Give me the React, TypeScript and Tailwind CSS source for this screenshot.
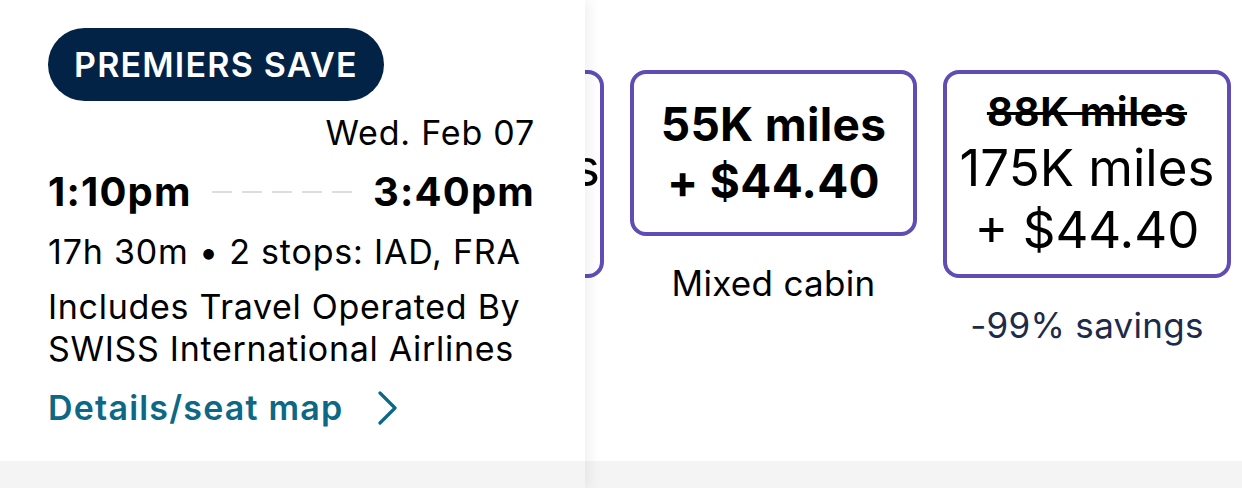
import React from 'react';

const font = { fontFamily: 'Inter, "Noto Sans", sans-serif' };

const FlightInfo: React.FC = () => (
  <div className="flex-1 bg-white pl-[48px] pr-[50px] pt-[28px]">
    <div className="inline-flex h-[73px] items-center rounded-full bg-[#032346] px-[26px] text-[34px] font-semibold tracking-[1.2px] text-white">
      PREMIERS SAVE
    </div>
    <div className="mt-[12px] text-right text-[34px] leading-[40px] tracking-[0.8px] text-black">Wed. Feb 07</div>
    <div className="mt-[15px] flex h-[48px] items-center">
      <span className="text-[40px] font-bold tracking-[1.2px] text-black">1:10pm</span>
      <div className="ml-[20px] mr-[17px] h-[2px] flex-1 bg-[repeating-linear-gradient(90deg,#dddddd_0_20px,transparent_20px_30px)]" />
      <span className="text-[40px] font-bold tracking-[1.2px] text-black">3:40pm</span>
    </div>
    <div className="mt-[15px] text-[34px] leading-[42px] tracking-[0.8px] text-black">17h 30m • 2 stops: IAD, FRA</div>
    <div className="mt-[13px] text-[34px] leading-[42px] tracking-[0.7px] text-black">
      Includes Travel Operated By
      <br />
      SWISS International Airlines
    </div>
    <div className="mt-[17px] flex items-center gap-[34px] text-[34px] font-semibold leading-[42px] tracking-[1.2px] text-[#0d6885]">
      Details/seat map
      <svg width="21" height="34" viewBox="0 0 21 34" fill="none">
        <path d="M3 2 L18 17 L3 32" stroke="#0d6885" strokeWidth="3.2" strokeLinecap="round" strokeLinejoin="round" />
      </svg>
    </div>
  </div>
);

const PriceCards: React.FC = () => (
  <div className="ml-[-268px] flex items-start gap-[26px] pt-[70px]">
    {/* card partly hidden under the sticky column */}
    <div className="flex w-[287px] flex-col items-center">
      <div className="w-full rounded-[16px] border-[4px] border-[#5f4db5] pb-[14px] pt-[18px] text-center">
        <div className="text-[40px] font-bold leading-[40px] tracking-[0.6px] text-black line-through">88K miles</div>
        <div className="mt-[4px] whitespace-nowrap text-right text-[51px] leading-[64px] text-black">175K miles</div>
        <div className="text-[51px] leading-[60px] text-black">+ $44.40</div>
      </div>
    </div>

    <div className="flex w-[287px] flex-col items-center">
      <div className="w-full rounded-[16px] border-[4px] border-[#5f4db5] py-[22px] text-center">
        <div className="text-[46px] font-bold leading-[57px] tracking-[0.3px] text-black">55K miles</div>
        <div className="text-[46px] font-bold leading-[57px] tracking-[0.3px] text-black">+ $44.40</div>
      </div>
      <div className="mt-[29px] text-[35px] leading-[36px] tracking-[0.3px] text-black">Mixed cabin</div>
    </div>

    <div className="flex w-[288px] flex-col items-center">
      <div className="w-full rounded-[16px] border-[4px] border-[#5f4db5] pb-[14px] pt-[18px] text-center">
        <div className="text-[40px] font-bold leading-[40px] tracking-[0.6px] text-black line-through decoration-[3px]">88K miles</div>
        <div className="mt-[4px] text-[51px] leading-[64px] text-black">175K miles</div>
        <div className="text-[51px] leading-[60px] text-black">+ $44.40</div>
      </div>
      <div className="mt-[29px] text-[35px] leading-[36px] tracking-[0.3px] text-[#1d2b4b]">-99% savings</div>
    </div>
  </div>
);

export default function App() {
  return (
    <div className="flex h-[488px] w-[1242px] overflow-hidden bg-white" style={font}>
      <div className="relative z-10 flex w-[585px] shrink-0 flex-col shadow-[6px_0_10px_rgba(0,0,0,0.05)]">
        <FlightInfo />
        <div className="h-[27px] bg-[#f4f4f4]" />
      </div>
      <div className="flex min-w-0 flex-1 flex-col overflow-hidden">
        <div className="flex-1 bg-white">
          <PriceCards />
        </div>
        <div className="h-[27px] bg-[#f4f4f4]" />
      </div>
    </div>
  );
}
